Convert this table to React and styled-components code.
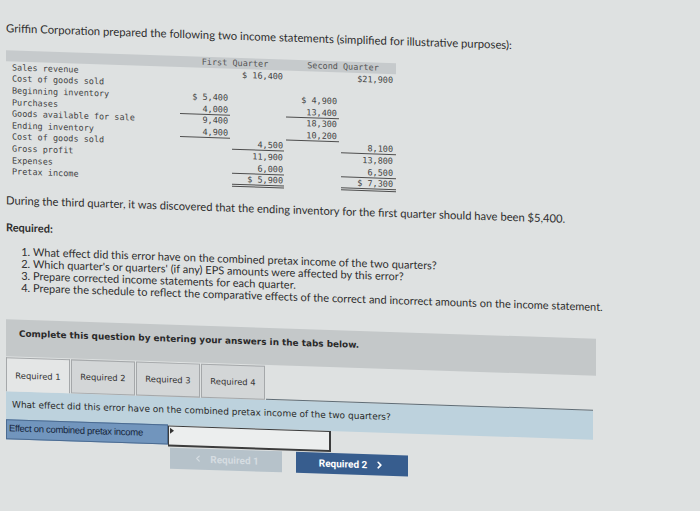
import React from "react";
import styled, { createGlobalStyle } from "styled-components";
import { ChevronLeft, ChevronRight } from "lucide-react";

const GlobalStyle = createGlobalStyle`
  html, body { margin: 0; padding: 0; background: #dee1e1; }
  body { font-family: Lato, "Open Sans", sans-serif; color: #2c2c2c; overflow: hidden; }
  * { box-sizing: border-box; }
`;

/* the reference is a photo of a screen, slightly tilted: a small skew reproduces it */
const Page = styled.div`
  width: 700px;
  height: 511px;
  padding: 21px 0 0 6px;
  transform: skewY(1.9deg);
  transform-origin: 0 0;
`;

const Text = styled.p`
  margin: 0;
  font-size: ${(p) => p.$size || 11}px;
  line-height: 14px;
  color: #2e2e2e;
  white-space: nowrap;
`;

const Statement = styled.div`
  width: 390px;
  margin: 14.5px 0 0;
  font-family: "DejaVu Sans Mono", "Liberation Mono", monospace;
  font-size: 8.5px;
  color: #444;
`;

const HeaderBand = styled.div`
  display: grid;
  grid-template-columns: 172px 106px 112px;
  height: 11px;
  line-height: 11px;
  background: #c6cacc;
  color: #555;
`;

const HeaderCell = styled.span`
  text-align: center;
  padding-left: ${(p) => p.$shift || 0}px;
`;

const Rows = styled.div`
  margin-top: 1px;
`;

const Row = styled.div`
  display: grid;
  grid-template-columns: 172px 52px 54px 55px 57px;
  align-items: start;
`;

const lineStyles = {
  none: "1px solid transparent",
  single: "1px solid #4e4e4e",
  double: "3px double #4e4e4e",
};

const Cell = styled.span`
  height: 9px;
  line-height: 9px;
  padding-top: 1.3px;
  box-sizing: content-box;
  margin-bottom: 0.3px;
  white-space: nowrap;
  border-bottom: ${(p) => lineStyles[p.$line || "none"]};
`;

const Label = styled(Cell)`
  padding-left: 6px;
`;

const Num = styled(Cell)`
  margin-left: 2px;
  text-align: right;
  padding-right: ${(p) => p.$pad ?? 1}px;
`;

const Heading = styled(Text)`
  font-weight: 700;
  margin-top: 12.5px;
`;

const During = styled(Text)`
  margin-top: 14px;
`;

const List = styled.ol`
  margin: 11px 0 0;
  padding: 0 0 0 27px;
  font-size: 11px;
  line-height: 12px;
  color: #2e2e2e;
  white-space: nowrap;
`;

const Instruction = styled.div`
  width: 590px;
  height: 37px;
  margin-top: 26.5px;
  padding: 8px 13px 0;
  background: #c4c8c9;
  font-family: "DejaVu Sans", Verdana, sans-serif;
  font-weight: 700;
  font-size: 8.9px;
  line-height: 12px;
  color: #2a2a2a;
`;

const TabStrip = styled.div`
  display: flex;
  align-items: flex-end;
  gap: 1px;
  width: 587px;
  margin-top: 1px;
`;

const Tab = styled.div`
  width: 64px;
  height: 33.5px;
  display: flex;
  align-items: center;
  justify-content: center;
  border: 1px solid #a5a8aa;
  border-bottom: ${(p) => (p.$active ? "none" : "1px solid #a5a8aa")};
  background: ${(p) => (p.$active ? "#e4e6e6" : "#d3d6d7")};
  font-family: "DejaVu Sans", Verdana, sans-serif;
  font-size: 8.4px;
  color: #333;
`;

const TabFiller = styled.div`
  flex: 1;
  border-bottom: 1px solid #5f6c75;
`;

const QuestionBand = styled.div`
  width: 587px;
  height: 29px;
  padding: 7px 0 0 6px;
  background: #bdd2dd;
  font-family: "DejaVu Sans", Verdana, sans-serif;
  font-size: 9px;
  line-height: 12px;
  color: #2a2a2a;
  white-space: nowrap;
`;

const AnswerRow = styled.div`
  display: flex;
  align-items: flex-start;
`;

const AnswerLabel = styled.div`
  width: 162px;
  height: 20px;
  margin-top: -1px;
  padding: 2px 0 0 2px;
  background: #7195bd;
  border: 1px solid #4b6b91;
  font-family: "Liberation Sans Narrow", "Liberation Sans", Arial, sans-serif;
  font-size: 9.5px;
  letter-spacing: -0.3px;
  color: #16253b;
`;

const InputBox = styled.div`
  position: relative;
  width: 163px;
  height: 21px;
  border: 1px solid #3c3c3c;
  border-bottom-width: 2px;
  border-right-width: 2px;
  background: #eceeee;

  &::before {
    content: "";
    position: absolute;
    left: 1px;
    top: 1px;
    border-left: 4px solid #333;
    border-top: 3px solid transparent;
    border-bottom: 3px solid transparent;
  }
`;

const Field = styled.input`
  width: 100%;
  height: 100%;
  border: none;
  background: transparent;
  outline: none;
`;

const Nav = styled.div`
  display: flex;
  gap: 14px;
  margin-top: 1px;
  padding-left: 164px;
`;

const NavButton = styled.button`
  width: 112px;
  height: 21px;
  display: flex;
  align-items: center;
  justify-content: center;
  gap: 7px;
  border: none;
  padding: 0;
  background: ${(p) => (p.disabled ? "#b6c2ca" : "#375d8e")};
  color: ${(p) => (p.disabled ? "#d5dce1" : "#fff")};
  font-family: Roboto, "Liberation Sans", sans-serif;
  font-weight: 700;
  font-size: 10px;
`;

const rows = [
  { label: "Sales revenue", c: [null, "$ 16,400", null, "$21,900"] },
  { label: "Cost of goods sold", c: [null, null, null, null] },
  { label: "Beginning inventory", c: ["$ 5,400", null, "$ 4,900", null] },
  { label: "Purchases", c: ["4,000", null, "13,400", null], l: ["single", null, "single", null] },
  { label: "Goods available for sale", c: ["9,400", null, "18,300", null] },
  { label: "Ending inventory", c: ["4,900", null, "10,200", null], l: ["single", null, "single", null] },
  { label: "Cost of goods sold", c: [null, "4,500", null, "8,100"], l: [null, "single", null, "single"] },
  { label: "Gross profit", c: [null, "11,900", null, "13,800"] },
  { label: "Expenses", c: [null, "6,000", null, "6,500"], l: [null, "single", null, "single"] },
  { label: "Pretax income", c: [null, "$ 5,900", null, "$ 7,300"], l: [null, "double", null, "double"] },
];

const pads = [2, 1, 2, 3];

const tabs = ["Required 1", "Required 2", "Required 3", "Required 4"];

export default function App() {
  return (
    <>
      <GlobalStyle />
      <Page>
        <Text $size={11.3}>
          Griffin Corporation prepared the following two income statements (simplified for illustrative purposes):
        </Text>

        <Statement>
          <HeaderBand>
            <span />
            <HeaderCell $shift={8}>First Quarter</HeaderCell>
            <HeaderCell $shift={6}>Second Quarter</HeaderCell>
          </HeaderBand>
          <Rows>
            {rows.map((r, i) => (
              <Row key={i}>
                <Label>{r.label}</Label>
                {r.c.map((v, j) => (
                  <Num key={j} $pad={pads[j]} $line={v && r.l ? r.l[j] || "none" : "none"}>
                    {v}
                  </Num>
                ))}
              </Row>
            ))}
          </Rows>
        </Statement>

        <During $size={11.2}>
          During the third quarter, it was discovered that the ending inventory for the first quarter should have been $5,400.
        </During>
        <Heading>Required:</Heading>
        <List>
          <li>What effect did this error have on the combined pretax income of the two quarters?</li>
          <li>Which quarter's or quarters' (if any) EPS amounts were affected by this error?</li>
          <li>Prepare corrected income statements for each quarter.</li>
          <li>Prepare the schedule to reflect the comparative effects of the correct and incorrect amounts on the income statement.</li>
        </List>

        <Instruction>Complete this question by entering your answers in the tabs below.</Instruction>

        <TabStrip>
          {tabs.map((t, i) => (
            <Tab key={t} $active={i === 0}>
              {t}
            </Tab>
          ))}
          <TabFiller />
        </TabStrip>
        <QuestionBand>What effect did this error have on the combined pretax income of the two quarters?</QuestionBand>
        <AnswerRow>
          <AnswerLabel>Effect on combined pretax income</AnswerLabel>
          <InputBox>
            <Field aria-label="Effect on combined pretax income" />
          </InputBox>
        </AnswerRow>

        <Nav>
          <NavButton disabled>
            <ChevronLeft size={10} strokeWidth={3} />
            Required 1
          </NavButton>
          <NavButton>
            Required 2
            <ChevronRight size={11} strokeWidth={3.5} />
          </NavButton>
        </Nav>
      </Page>
    </>
  );
}
